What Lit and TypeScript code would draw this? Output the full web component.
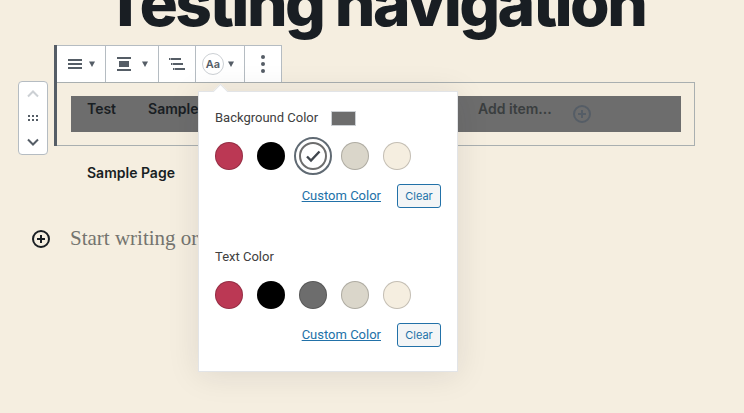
import { LitElement, html, css, svg, nothing } from "lit";
import { customElement, property, state } from "lit/decorators.js";
import { classMap } from "lit/directives/class-map.js";

const PALETTE = [
  { name: "Accent", value: "#bb3854" },
  { name: "Primary", value: "#000000" },
  { name: "Secondary", value: "#6d6d6d" },
  { name: "Subtle", value: "#dad6ca" },
  { name: "Canvas", value: "#f5eee0" },
];

const caret = html`<svg class="caret" width="6" height="6" viewBox="0 0 6 6" aria-hidden="true">
  <path d="M0 0.5h6L3 6z" fill="currentColor" />
</svg>`;

const icon = (shape: unknown) => html`<svg width="20" height="20" viewBox="0 0 20 20" fill="currentColor" aria-hidden="true">${shape}</svg>`;

const icons = {
  menu: svg`<path d="M3 5h14v2H3zM3 9h14v2H3zM3 13h14v2H3z" />`,
  center: svg`<path d="M3 3h14v2H3zM5 7h10v6H5zM3 15h14v2H3z" />`,
  outline: svg`<path d="M2 4h1.500v2H2zM4 4h10v2H4zM4 9h1.500v2H4zM6 9h10v2H6zM6 14h1.500v2H6zM8 14h10v2H8z" />`,
  more: svg`<circle cx="10" cy="3" r="2" /><circle cx="10" cy="10" r="2" /><circle cx="10" cy="17" r="2" />`,
  plus: svg`<circle cx="10" cy="10" r="8" fill="none" stroke="currentColor" stroke-width="2" /><path d="M9 6h2v3h3v2h-3v3H9v-3H6V9h3z" />`,
  up: svg`<path d="M5 12.5l5-5 5 5" fill="none" stroke="currentColor" stroke-width="2" />`,
  down: svg`<path d="M5 7.5l5 5 5-5" fill="none" stroke="currentColor" stroke-width="2" />`,
  grip: svg`<path d="M5 7h2v2H5zM9 7h2v2H9zM13 7h2v2h-2zM5 11h2v2H5zM9 11h2v2H9zM13 11h2v2h-2z" />`,
  check: svg`<path d="M4 10.5l4 4 8.500-9" fill="none" stroke="currentColor" stroke-width="2.4" />`,
};

@customElement("color-picker")
class ColorPicker extends LitElement {
  @property() label = "";
  @property() value = "";

  static styles = css`
    :host { display: block; }
    .group { margin: 0; padding: 0; border: 0; min-width: 0; }
    .label {
      display: flex; align-items: center; gap: 13px;
      padding: 0; height: 20px; margin-bottom: 14px; line-height: 20px;
    }
    .current { width: 25px; height: 15px; box-sizing: border-box; border: 1px solid #ccd0d4; }
    .swatches { display: flex; gap: 14px; margin-bottom: 14px; }
    .swatch {
      width: 28px; height: 28px; padding: 0; border-radius: 50%;
      border: 1px solid rgba(0, 0, 0, 0.2); background-clip: border-box;
      display: flex; align-items: center; justify-content: center;
      color: #40464d; cursor: pointer;
    }
    .swatch.selected {
      border: 2px solid #6d6d6d; background: #fff;
      outline: 2px solid #606a73; outline-offset: 3px;
    }
    .actions { display: flex; justify-content: flex-end; align-items: center; gap: 16px; }
    .custom {
      border: 0; padding: 0; background: none; font: inherit; line-height: 20px;
      color: #2271a8; text-decoration: underline; cursor: pointer;
    }
    .clear {
      width: 44px; height: 24px; padding: 0; font-family: Inter, "Liberation Sans", sans-serif; font-size: 11px;
      color: #2271a8; background: #f3f5f6; border: 1px solid #2271a8; border-radius: 3px;
    }
  `;

  render() {
    return html`
      <fieldset class="group" aria-label=${this.label}>
        <div class="label">
          <span>${this.label}</span>
          ${this.value ? html`<span class="current" style="background:${this.value}"></span>` : nothing}
        </div>
        <div class="swatches">
          ${PALETTE.map((c) => {
            const selected = c.value === this.value;
            return html`<button
              class=${classMap({ swatch: true, selected })}
              style=${selected ? "" : `background-color:${c.value}`}
              aria-label=${c.name}
              aria-pressed=${selected}
              @click=${() => (this.value = c.value)}
            >${selected ? icon(icons.check) : nothing}</button>`;
          })}
        </div>
        <div class="actions">
          <button class="custom">Custom Color</button>
          <button class="clear" @click=${() => (this.value = "")}>Clear</button>
        </div>
      </fieldset>
    `;
  }
}

@customElement("app-root")
class AppRoot extends LitElement {
  @state() open = true;

  static styles = css`
    :host {
      display: block; min-height: 100vh; overflow: hidden; background: #f5eee0;
      font-family: Inter, "Liberation Sans", sans-serif; font-size: 13px; color: #404040;
    }
    button { font: inherit; color: inherit; background: none; border: 0; padding: 0; cursor: pointer; }
    svg { display: block; flex: none; }
    .page { display: grid; grid-template-columns: 54px minmax(0, 1fr) 49px; }
    .title {
      grid-column: 2; height: 45px; padding-bottom: 10px; box-sizing: border-box;
      display: flex; align-items: flex-end; justify-content: center;
    }
    .title h1 {
      margin: 0; font-size: 64px; line-height: 64px; font-weight: 800;
      letter-spacing: -0.04em; white-space: nowrap; color: #191e23;
    }
    .side { grid-column: 1; grid-row: 2 / span 2; padding: 36px 0 0 18px; }
    .mover {
      width: 30px; height: 74px; box-sizing: border-box; padding: 2px 0 2px;
      display: flex; flex-direction: column; align-items: center; justify-content: space-between;
      background: #fff; border: 1px solid #b5bcc2; border-radius: 4px; color: #555d66;
    }
    .mover button:disabled { color: #ccd0d4; }
    .block { grid-column: 2; grid-row: 2; border-left: 3px solid #555d66; }
    .toolbar {
      display: flex; width: max-content; height: 38px; box-sizing: border-box;
      background: #fff; border: 1px solid #b5bcc2; border-left: 0; color: #555d66;
    }
    .tool { display: flex; align-items: center; height: 36px; padding: 0 8px; }
    .slot { position: relative; border-right: 1px solid #b5bcc2; }
    .slot:last-child { border-right: 0; }
    .menu { gap: 4px; width: 48px; padding-right: 0; }
    .align { gap: 8px; width: 52px; padding-right: 0; }
    .style { gap: 4px; width: 48px; padding: 0 0 0 6px; }
    .aa {
      width: 22px; height: 22px; box-sizing: border-box; border: 1px solid #ccd0d4;
      border-radius: 50%; font-size: 11px; line-height: 20px; font-weight: 600; text-align: center;
    }
    .popover {
      position: absolute; z-index: 2; left: 2px; top: 45px; width: 260px; box-sizing: border-box;
      padding: 16px 16px 24px; background: #fff; border: 1px solid #e2e4e7;
      box-shadow: 0 3px 30px rgba(25, 30, 35, 0.1); color: #404040;
      display: flex; flex-direction: column; gap: 39px;
      font-family: Roboto, "Liberation Sans", sans-serif; font-size: 13px;
    }
    .popover::before {
      content: ""; position: absolute; left: 16px; top: -6px; width: 10px; height: 10px;
      background: #fff; border: 1px solid #e2e4e7; border-right: 0; border-bottom: 0;
      transform: rotate(45deg);
    }
    .frame { margin-top: -1px; padding: 13px 13px 13px 14px; border: 1px solid #a9afb0; border-left: 0; }
    .nav {
      display: flex; align-items: flex-start; height: 36px; padding-left: 16px;
      background: #6d6d6d; color: #191e23; font-size: 14px; line-height: 20px; font-weight: 600;
    }
    .links { display: flex; gap: 32px; flex: 0 0 391px; padding-top: 3px; }
    a { color: inherit; text-decoration: none; }
    .add { display: flex; gap: 24px; height: 36px; white-space: nowrap; color: #3a3e3f; }
    .add span { padding-top: 3px; width: 70px; }
    .add button { color: #555d66; }
    .below {
      grid-column: 2; grid-row: 3; padding: 17px 0 0 33px; font-size: 14px; line-height: 20px;
      font-weight: 600; color: #191e23;
    }
    .insert { grid-column: 1; padding: 46px 0 0 31px; color: #191e23; }
    .write { grid-column: 2; padding: 39px 0 0 16px; }
    .write input {
      width: 100%; height: 32px; padding: 0; border: 0; outline: 0; background: none;
      font-family: "Liberation Serif", serif; font-size: 21px; color: #191e23;
    }
    .write input::placeholder { color: #74746f; opacity: 1; }
  `;

  render() {
    return html`
      <main class="page">
        <header class="title"><h1>Testing navigation</h1></header>
        <div class="side">
          <div class="mover">
            <button aria-label="Move up" disabled>${icon(icons.up)}</button>
            <button aria-label="Drag block">${icon(icons.grip)}</button>
            <button aria-label="Move down">${icon(icons.down)}</button>
          </div>
        </div>
        <section class="block">
          <div class="toolbar" role="toolbar">
            <div class="slot"><button class="tool menu" aria-label="Block type">${icon(icons.menu)}${caret}</button></div>
            <div class="slot"><button class="tool align" aria-label="Alignment">${icon(icons.center)}${caret}</button></div>
            <div class="slot"><button class="tool" aria-label="Structure">${icon(icons.outline)}</button></div>
            <div class="slot">
              <button class="tool style" aria-label="Colors" aria-expanded=${this.open} @click=${() => (this.open = !this.open)}>
                <span class="aa">Aa</span>${caret}
              </button>
              ${this.open
                ? html`<div class="popover">
                    <color-picker label="Background Color" value="#6d6d6d"></color-picker>
                    <color-picker label="Text Color"></color-picker>
                  </div>`
                : nothing}
            </div>
            <div class="slot"><button class="tool" aria-label="More options">${icon(icons.more)}</button></div>
          </div>
          <div class="frame">
            <nav class="nav">
              <div class="links"><a href="#test">Test</a><a href="#sample">Sample</a></div>
              <div class="add"><span>Add item...</span><button aria-label="Add">${icon(icons.plus)}</button></div>
            </nav>
          </div>
        </section>
        <div class="below"><a href="#sample-page">Sample Page</a></div>
        <div class="insert"><button aria-label="Add block">${icon(icons.plus)}</button></div>
        <div class="write"><input aria-label="Paragraph" placeholder="Start writing or" /></div>
      </main>
    `;
  }
}
